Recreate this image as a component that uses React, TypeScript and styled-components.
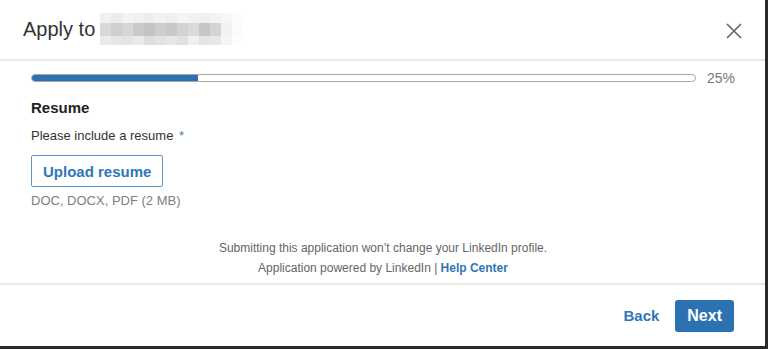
import React from 'react';
import styled, { createGlobalStyle } from 'styled-components';

const GlobalStyle = createGlobalStyle`
  html, body {
    margin: 0;
    padding: 0;
    background: #2a2a2a;
  }
  body {
    font-family: "Liberation Sans", Arial, sans-serif;
    -webkit-font-smoothing: antialiased;
  }
`;

const mosaic = [
  ['#f1f1f1', '#ececec', '#f3f3f3', '#f0f0f0', '#eeeeee', '#f2f2f2', '#efefef', '#f4f4f4', '#f1f1f1', '#f0f0f0', '#f3f3f3', '#f7f7f7', '#fcfcfc'],
  ['#d9d9d9', '#cfcfcf', '#d6d6d6', '#c9c9c9', '#c3c3c3', '#cdcdcd', '#c8c8c8', '#d3d3d3', '#dadada', '#c6c6c6', '#d4d4d4', '#f2f2f2', '#fbfbfb'],
  ['#ebebeb', '#e6e6e6', '#e4e4e4', '#e9e9e9', '#dedede', '#e3e3e3', '#e7e7e7', '#e1e1e1', '#f0f0f0', '#e5e5e5', '#e8e8e8', '#f5f5f5', '#fdfdfd'],
];

const App: React.FC = () => {
  const progress = 25;

  return (
    <>
      <GlobalStyle />
      <Modal>
        <Header>
          <Title>
            Apply to
            <Blur>
              {mosaic.map((row, r) =>
                row.map((c, i) => <Cell key={`${r}-${i}`} style={{ background: c }} />)
              )}
            </Blur>
          </Title>
          <CloseButton aria-label="Dismiss">
            <svg width="16" height="16" viewBox="0 0 16 16">
              <path d="M1 1 L15 15 M15 1 L1 15" stroke="#666" strokeWidth="1.7" fill="none" />
            </svg>
          </CloseButton>
        </Header>

        <Body>
          <ProgressRow>
            <Track>
              <Fill style={{ width: `${progress}%` }} />
            </Track>
            <Percent>{progress}%</Percent>
          </ProgressRow>

          <SectionTitle>Resume</SectionTitle>
          <Label>
            Please include a resume <Required>*</Required>
          </Label>
          <UploadButton>Upload resume</UploadButton>
          <Hint>DOC, DOCX, PDF (2 MB)</Hint>

          <Notice>
            <div>Submitting this application won’t change your LinkedIn profile.</div>
            <div>
              Application powered by LinkedIn | <HelpLink>Help Center</HelpLink>
            </div>
          </Notice>
        </Body>

        <Footer>
          <BackButton>Back</BackButton>
          <NextButton>Next</NextButton>
        </Footer>
      </Modal>
    </>
  );
};

const Modal = styled.div`
  width: 765px;
  height: 346px;
  background: #fff;
  display: flex;
  flex-direction: column;
  box-sizing: border-box;
`;

const Header = styled.div`
  height: 61px;
  box-sizing: border-box;
  flex: none;
  display: flex;
  align-items: center;
  justify-content: space-between;
  padding: 0 19px 0 23px;
  border-bottom: 2px solid #e9e9e9;
`;

const Title = styled.h2`
  margin: 0;
  display: flex;
  align-items: center;
  font-size: 20px;
  font-weight: 400;
  color: #333;
  gap: 5px;
`;

const Blur = styled.span`
  display: grid;
  grid-template-columns: repeat(13, 11px);
  grid-template-rows: 10px 13px 9px;
  margin-top: -1px;
`;

const Cell = styled.span`
  display: block;
`;

const CloseButton = styled.button`
  background: none;
  border: none;
  padding: 0;
  width: 24px;
  height: 24px;
  display: flex;
  align-items: center;
  justify-content: center;
  cursor: pointer;
  margin-top: 2px;
`;

const Body = styled.div`
  flex: 1;
  display: flex;
  flex-direction: column;
  align-items: flex-start;
  padding: 9px 30px 0 31px;
`;

const ProgressRow = styled.div`
  width: 100%;
  display: flex;
  align-items: center;
  gap: 11px;
`;

const Track = styled.div`
  flex: 1;
  height: 8px;
  box-sizing: border-box;
  border: 1px solid #a6a6a6;
  border-radius: 4px;
  overflow: hidden;
  background: #fff;
`;

const Fill = styled.div`
  height: 100%;
  background: #2c72b1;
`;

const Percent = styled.span`
  font-size: 14px;
  color: #777;
  width: 28px;
`;

const SectionTitle = styled.h3`
  margin: 12px 0 0;
  font-size: 15px;
  font-weight: 600;
  color: #222;
  line-height: 20px;
`;

const Label = styled.div`
  margin-top: 9px;
  font-size: 13px;
  color: #333;
  line-height: 18px;
`;

const Required = styled.span`
  color: #3b82c4;
  margin-left: 2px;
`;

const UploadButton = styled.button`
  margin-top: 10px;
  height: 32px;
  padding: 0 11px;
  background: #fff;
  border: 1px solid #5b95cc;
  border-radius: 2px;
  font-family: inherit;
  font-size: 15px;
  font-weight: 600;
  color: #2f77b7;
  cursor: pointer;
`;

const Hint = styled.div`
  margin-top: 5px;
  font-size: 13px;
  color: #808080;
  line-height: 18px;
`;

const Notice = styled.div`
  align-self: stretch;
  margin-top: auto;
  margin-bottom: 5px;
  text-align: center;
  font-size: 12px;
  line-height: 20px;
  color: #666;
`;

const HelpLink = styled.a`
  color: #2f77b7;
  font-weight: 600;
`;

const Footer = styled.div`
  height: 63px;
  box-sizing: border-box;
  flex: none;
  display: flex;
  align-items: center;
  justify-content: flex-end;
  gap: 8px;
  padding: 0 31px 0 0;
  border-top: 2px solid #e9e9e9;
`;

const BackButton = styled.button`
  background: none;
  border: none;
  padding: 0 8px;
  height: 32px;
  font-family: inherit;
  font-size: 15px;
  font-weight: 600;
  color: #2f77b7;
  cursor: pointer;
`;

const NextButton = styled.button`
  height: 32px;
  padding: 0 12px;
  background: #2c72b1;
  border: none;
  border-radius: 3px;
  font-family: inherit;
  font-size: 16px;
  font-weight: 600;
  color: #fff;
  cursor: pointer;
`;

export default App;
